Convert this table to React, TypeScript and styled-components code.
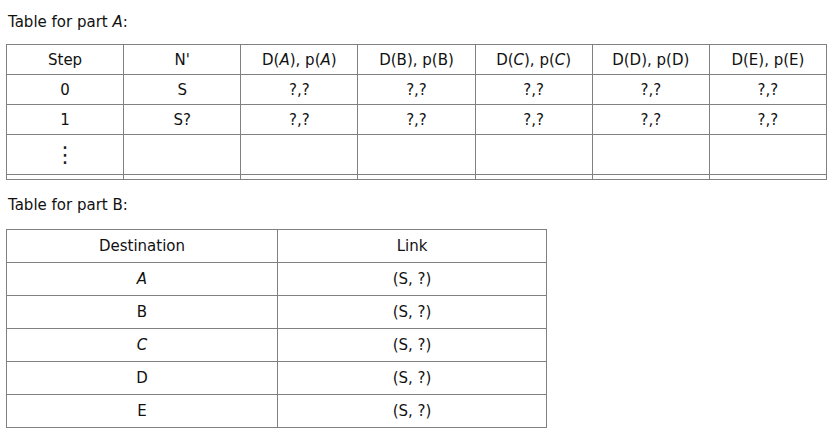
import React from "react";
import styled, { createGlobalStyle } from "styled-components";

const Global = createGlobalStyle`
  html, body {
    margin: 0;
    padding: 0;
    background: #ffffff;
  }
  body {
    font-family: "DejaVu Sans", "Liberation Sans", sans-serif;
    font-size: 15px;
    color: #111111;
  }
`;

const Page = styled.div`
  display: flex;
  flex-direction: column;
  align-items: flex-start;
  padding: 13px 0 0 6px;
`;

const Caption = styled.div<{ $gapAfter: number; $gapBefore?: number }>`
  height: 18px;
  line-height: 18px;
  padding-left: 2px;
  margin-top: ${(p) => p.$gapBefore ?? 0}px;
  margin-bottom: ${(p) => p.$gapAfter}px;
  white-space: nowrap;
`;

const Var = styled.i`
  font-style: italic;
`;

const Grid = styled.table<{ $width: number }>`
  border-collapse: collapse;
  table-layout: fixed;
  width: ${(p) => p.$width}px;
`;

const Col = styled.col<{ $w: number }>`
  width: ${(p) => p.$w}px;
`;

const Row = styled.tr<{ $h: number }>`
  height: ${(p) => p.$h}px;
`;

const Cell = styled.td`
  border: 1px solid #808080;
  padding: 0;
  text-align: center;
  vertical-align: middle;
  line-height: 18px;
  white-space: nowrap;
`;

const Ellipsis = styled.span`
  display: inline-block;
  font-size: 22px;
  line-height: 24px;
  color: #222222;
`;

const partACols = [
  <>Step</>,
  <>N'</>,
  <>D(<Var>A</Var>), p(<Var>A</Var>)</>,
  <>D(B), p(B)</>,
  <>D(<Var>C</Var>), p(<Var>C</Var>)</>,
  <>D(D), p(D)</>,
  <>D(E), p(E)</>,
];

const partARows = [
  ["0", "S", "?,?", "?,?", "?,?", "?,?", "?,?"],
  ["1", "S?", "?,?", "?,?", "?,?", "?,?", "?,?"],
];

const partBRows: React.ReactNode[] = [
  <Var key="a">A</Var>,
  "B",
  <Var key="c">C</Var>,
  "D",
  "E",
];

export default function App() {
  return (
    <>
      <Global />
      <Page>
        <Caption $gapAfter={13}>
          Table for part <Var>A</Var>:
        </Caption>
        <Grid $width={821}>
          <colgroup>
            {partACols.map((_, i) => (
              <Col key={i} $w={117} />
            ))}
          </colgroup>
          <tbody>
            <Row $h={30}>
              {partACols.map((c, i) => (
                <Cell key={i}>{c}</Cell>
              ))}
            </Row>
            {partARows.map((r, ri) => (
              <Row key={ri} $h={30}>
                {r.map((c, ci) => (
                  <Cell key={ci}>{c}</Cell>
                ))}
              </Row>
            ))}
            <Row $h={40}>
              <Cell>
                <Ellipsis>⋮</Ellipsis>
              </Cell>
              {partACols.slice(1).map((_, i) => (
                <Cell key={i} />
              ))}
            </Row>
            <Row $h={5}>
              {partACols.map((_, i) => (
                <Cell key={i} />
              ))}
            </Row>
          </tbody>
        </Grid>
        <Caption $gapBefore={16} $gapAfter={15}>
          Table for part B:
        </Caption>
        <Grid $width={540}>
          <colgroup>
            <Col $w={271} />
            <Col $w={269} />
          </colgroup>
          <tbody>
            <Row $h={33}>
              <Cell>Destination</Cell>
              <Cell>Link</Cell>
            </Row>
            {partBRows.map((d, i) => (
              <Row key={i} $h={33}>
                <Cell>{d}</Cell>
                <Cell>(S, ?)</Cell>
              </Row>
            ))}
          </tbody>
        </Grid>
      </Page>
    </>
  );
}
